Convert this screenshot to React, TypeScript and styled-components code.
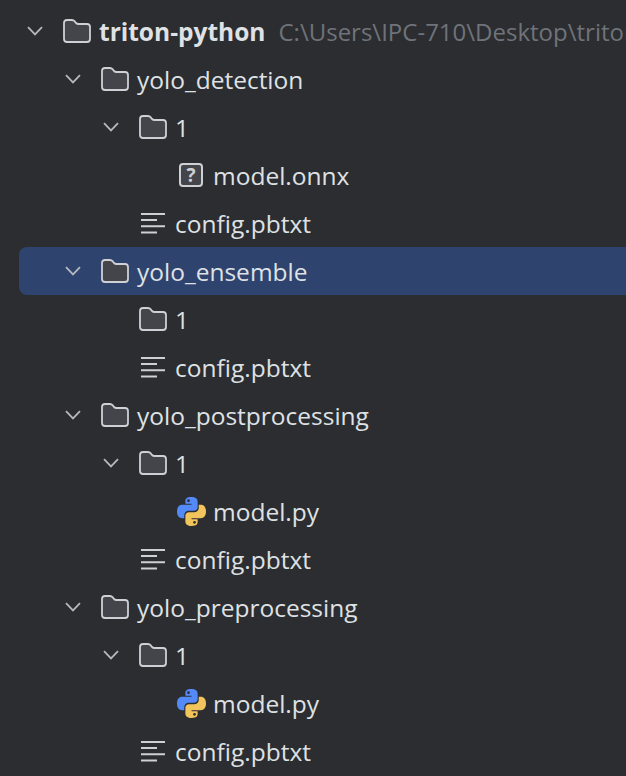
import { FunctionComponent } from 'react';
import styled, { createGlobalStyle } from 'styled-components';

const GlobalStyle = createGlobalStyle`
  html, body {
    margin: 0;
    height: 100%;
    background-color: #2b2d30;
    overflow: hidden;
  }
`;

const Tree = styled.div`
  display: flex;
  flex-direction: column;
  width: 626px;
  height: 776px;
  padding-top: 7px;
  box-sizing: border-box;
  overflow: hidden;
  background-color: #2b2d30;
  font-family: 'Open Sans', 'Noto Sans', sans-serif;
  color: #dfe1e5;
`;

const Row = styled.div<{ $depth: number; $selected?: boolean }>`
  display: flex;
  align-items: center;
  flex: none;
  height: 48px;
  margin-left: 19px;
  padding-left: ${(p) => 8 + p.$depth * 38}px;
  border-radius: 8px 0 0 8px;
  background-color: ${(p) => (p.$selected ? '#2e436e' : 'transparent')};
  white-space: nowrap;
`;

const ArrowSlot = styled.span`
  display: flex;
  flex: none;
  width: 36px;
`;

const IconSlot = styled.span`
  display: flex;
  align-items: center;
  justify-content: center;
  flex: none;
  width: 28px;
  height: 28px;
  margin-right: 8px;

  svg {
    flex: none;
  }
`;

const Label = styled.span<{ $bold?: boolean }>`
  font-size: 24.5px;
  font-weight: ${(p) => (p.$bold ? 700 : 400)};
`;

const Path = styled.span`
  margin-left: 13px;
  font-size: 24px;
  color: #6f737a;
`;

const UnknownBox = styled.span`
  display: flex;
  align-items: center;
  justify-content: center;
  box-sizing: border-box;
  width: 24px;
  height: 24px;
  border: 2px solid #ced0d6;
  border-radius: 4px;
  background-color: #43454a;
  color: #ced0d6;
  font-size: 19px;
  font-weight: 700;
  line-height: 20px;
`;

const Chevron = () => (
  <svg width="16" height="10" viewBox="0 0 16 10" fill="none">
    <path d="M1 1.2 L8 8.4 L15 1.2" stroke="#b4b8bf" strokeWidth="1.8" />
  </svg>
);

const FolderIcon = () => (
  <svg width="28" height="24" viewBox="0 0 28 24" fill="none">
    <path
      d="M1 4 Q1 1 4 1 H9 Q10.5 1 11.5 2.2 L13 4 Q14 5 15.5 5 H24 Q27 5 27 8 V20 Q27 23 24 23 H4 Q1 23 1 20 Z"
      fill="#43454a"
      stroke="#ced0d6"
      strokeWidth="1.8"
    />
  </svg>
);

const UnknownIcon = () => <UnknownBox>?</UnknownBox>;

const TextIcon = () => (
  <svg width="24" height="22" viewBox="0 0 24 22" fill="none" stroke="#ced0d6" strokeWidth="1.9">
    <path d="M0 2 H24 M0 8 H16 M0 14.200 H24 M0 20.500 H16" />
  </svg>
);

const PYTHON_HALF =
  'M13.8 1 C9.5 1 8.500 2.600 8.500 4.500 V7 H14 V8 H5.500 C3 8 1 10 1 14 C1 18 3 20 5.500 20 H7.500 V17.200 C7.500 15 9.300 13.300 11.500 13.300 H16.300 C18 13.300 19.500 12 19.500 10.200 V5 C19.500 2.500 17.500 1 13.800 1 Z';

const PythonIcon = () => (
  <svg width="29" height="29" viewBox="1 1 26 26">
    <path d={PYTHON_HALF} fill="#548af7" />
    <circle cx="11.300" cy="4.300" r="1.200" fill="#2b2d30" />
    <g transform="rotate(180 14 14)">
      <path d={PYTHON_HALF} fill="#f2c55c" />
      <circle cx="11.300" cy="4.300" r="1.200" fill="#2b2d30" />
    </g>
  </svg>
);

type IconKind = 'folder' | 'unknown' | 'text' | 'python';

const icons: Record<IconKind, FunctionComponent> = {
  folder: FolderIcon,
  unknown: UnknownIcon,
  text: TextIcon,
  python: PythonIcon,
};

interface NodeType {
  depth: number;
  icon: IconKind;
  name: string;
  open?: boolean;
  selected?: boolean;
}

const nodes: NodeType[] = [
  { depth: 1, icon: 'folder', name: 'yolo_detection', open: true },
  { depth: 2, icon: 'folder', name: '1', open: true },
  { depth: 3, icon: 'unknown', name: 'model.onnx' },
  { depth: 2, icon: 'text', name: 'config.pbtxt' },
  { depth: 1, icon: 'folder', name: 'yolo_ensemble', open: true, selected: true },
  { depth: 2, icon: 'folder', name: '1' },
  { depth: 2, icon: 'text', name: 'config.pbtxt' },
  { depth: 1, icon: 'folder', name: 'yolo_postprocessing', open: true },
  { depth: 2, icon: 'folder', name: '1', open: true },
  { depth: 3, icon: 'python', name: 'model.py' },
  { depth: 2, icon: 'text', name: 'config.pbtxt' },
  { depth: 1, icon: 'folder', name: 'yolo_preprocessing', open: true },
  { depth: 2, icon: 'folder', name: '1', open: true },
  { depth: 3, icon: 'python', name: 'model.py' },
  { depth: 2, icon: 'text', name: 'config.pbtxt' },
];

const App = () => {
  return (
    <>
      <GlobalStyle />
      <Tree>
        <Row $depth={0}>
          <ArrowSlot>
            <Chevron />
          </ArrowSlot>
          <IconSlot>
            <FolderIcon />
          </IconSlot>
          <Label $bold>triton-python</Label>
          <Path>C:\Users\IPC-710\Desktop\triton-python</Path>
        </Row>
        {nodes.map((node, index) => {
          const Icon = icons[node.icon];
          return (
            <Row key={index} $depth={node.depth} $selected={node.selected}>
              <ArrowSlot>{node.open && <Chevron />}</ArrowSlot>
              <IconSlot>
                <Icon />
              </IconSlot>
              <Label>{node.name}</Label>
            </Row>
          );
        })}
      </Tree>
    </>
  );
};

export default App;
